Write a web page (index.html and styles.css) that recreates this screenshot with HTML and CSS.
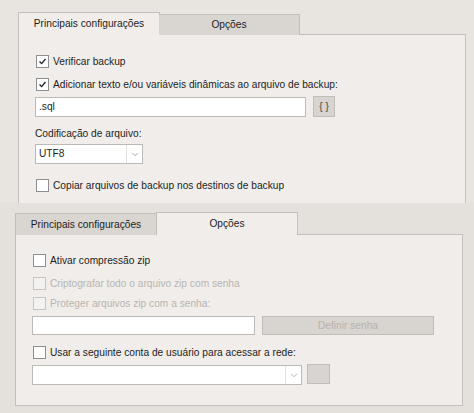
FILE: index.html
```html
<!DOCTYPE html>
<html lang="pt">
<head>
<meta charset="utf-8">
<link rel="stylesheet" href="styles.css">
</head>
<body>
<div class="shot shot-top">
  <div class="tabs">
    <div class="tab active t1">Principais configurações</div>
    <div class="tab t2">Opções</div>
  </div>
  <div class="panel">
    <div class="row r1"><span class="cb checked"><svg viewBox="0 0 13 13"><path d="M3 6.5 L5.5 9 L10 3.5" fill="none" stroke="#222" stroke-width="1.6"/></svg></span><span>Verificar backup</span></div>
    <div class="row r2"><span class="cb checked"><svg viewBox="0 0 13 13"><path d="M3 6.5 L5.5 9 L10 3.5" fill="none" stroke="#222" stroke-width="1.6"/></svg></span><span>Adicionar texto e/ou variáveis dinâmicas ao arquivo de backup:</span></div>
    <div class="line l1">
      <div class="input in-sql">.sql</div>
      <div class="btn brace">{ }</div>
    </div>
    <div class="label">Codificação de arquivo:</div>
    <div class="select sel-utf"><span class="val">UTF8</span><span class="arrow"><svg viewBox="0 0 9 6"><path d="M1 1 L4.5 4.5 L8 1" fill="none" stroke="#999" stroke-width="1"/></svg></span></div>
    <div class="row r3"><span class="cb"></span><span>Copiar arquivos de backup nos destinos de backup</span></div>
  </div>
</div>
<div class="shot shot-bottom">
  <div class="tabs">
    <div class="tab b1">Principais configurações</div>
    <div class="tab active b2">Opções</div>
  </div>
  <div class="panel">
    <div class="row s1"><span class="cb"></span><span>Ativar compressão zip</span></div>
    <div class="row s2 disabled"><span class="cb"></span><span>Criptografar todo o arquivo zip com senha</span></div>
    <div class="row s3 disabled"><span class="cb"></span><span>Proteger arquivos zip com a senha:</span></div>
    <div class="line l2">
      <div class="input in-pass"></div>
      <div class="btn btn-def">Definir senha</div>
    </div>
    <div class="row s4"><span class="cb"></span><span>Usar a seguinte conta de usuário para acessar a rede:</span></div>
    <div class="line l3">
      <div class="select sel-acc"><span class="val"></span><span class="arrow"><svg viewBox="0 0 9 6"><path d="M1 1 L4.5 4.5 L8 1" fill="none" stroke="#aaa" stroke-width="1"/></svg></span></div>
      <div class="btn btn-small"></div>
    </div>
  </div>
</div>
</body>
</html>
```

FILE: styles.css
```css
* { box-sizing: border-box; }
html, body {
  margin: 0;
  padding: 0;
  background: #e6e2de;
}
body {
  width: 474px;
  height: 413px;
  overflow: hidden;
  font-family: "Liberation Sans", Arial, sans-serif;
  font-size: 10.2px;
  color: #1e1e1e;
}
.shot {
  overflow: hidden;
  display: flex;
  flex-direction: column;
}
.shot-top {
  height: 203px;
  padding: 12px 8px 0 18px;
  background: #e8e4e0;
}
.shot-bottom {
  height: 210px;
  padding: 9px 11px 0 15px;
  background: #e4e0dc;
}
.tabs {
  display: flex;
  align-items: flex-end;
  position: relative;
  z-index: 1;
  margin-bottom: -1px;
}
.tab {
  height: 20px;
  border: 1px solid #c3bfbb;
  border-bottom: none;
  background: #d9d5d1;
  display: flex;
  align-items: center;
  justify-content: center;
  padding-bottom: 1px;
}
.tab.active {
  height: 23px;
  background: #f0edea;
  padding-bottom: 2px;
}
.t1 { width: 142px; }
.t2 { width: 141px; margin-left: -1px; border-left: none; height: 21px; }
.b1 { width: 142px; height: 22px; margin-top: 0; }
.b2 { width: 142px; margin-left: -1px; height: 24px; }
.panel {
  flex: 1;
  background: #f0edea;
  border: 1px solid #c3bfbb;
}
.shot-top .panel {
  padding: 18px 16px 0 16px;
  border-bottom: none;
}
.shot-bottom .panel {
  flex: none;
  height: 172px;
  padding: 17px 16px 0 17px;
}
.row {
  display: flex;
  align-items: center;
  height: 16px;
  gap: 4px;
}
.cb {
  width: 13px;
  height: 13px;
  border: 1px solid #8e8e8e;
  background: #fff;
  display: inline-block;
  flex: none;
}
.cb svg { display: block; width: 11px; height: 11px; }
.shot-top .cb { margin-left: 1px; }
.disabled { color: #b9b5b1; }
.disabled .cb { border-color: #c8c4c0; background: #f4f2f0; }
.r2 { margin-top: 7px; }
.line { display: flex; align-items: flex-start; }
.l1 { margin-top: 5px; }
.input {
  height: 20px;
  border: 1px solid #bdb9b5;
  background: #fff;
  padding: 2px 3px;
  line-height: 14px;
}
.in-sql { width: 271px; }
.btn {
  background: #d8d4d0;
  border: 1px solid #c1bdb9;
  display: flex;
  align-items: center;
  justify-content: center;
}
.brace {
  width: 22px;
  height: 21px;
  margin-left: 7px;
  margin-top: -1px;
  color: #444;
  font-size: 10px;
  white-space: pre;
}
.label { margin-top: 10px; height: 14px; line-height: 14px; }
.select {
  height: 20px;
  border: 1px solid #bdb9b5;
  background: #fff;
  display: flex;
  align-items: stretch;
}
.select .val { flex: 1; padding: 2px 3px; line-height: 14px; }
.select .arrow {
  width: 16px;
  border-left: 1px solid #e2dfdc;
  display: flex;
  align-items: center;
  justify-content: center;
}
.select .arrow svg { width: 8px; height: 5px; display: block; }
.sel-utf { width: 108px; margin-top: 3px; }
.r3 { margin-top: 13px; }
.s1 { margin-top: 0; }
.s2 { margin-top: 7px; }
.s3 { margin-top: 4px; }
.l2 { margin-top: 5px; }
.in-pass { width: 223px; height: 19px; margin-left: -1px; }
.btn-def {
  width: 172px;
  height: 19px;
  margin-left: 7px;
  color: #b7b3af;
}
.s4 { margin-top: 9px; }
.l3 { margin-top: 5px; }
.sel-acc { width: 270px; margin-left: -1px; }
.btn-small { width: 23px; height: 20px; margin-left: 5px; margin-top: -1px; }
```
